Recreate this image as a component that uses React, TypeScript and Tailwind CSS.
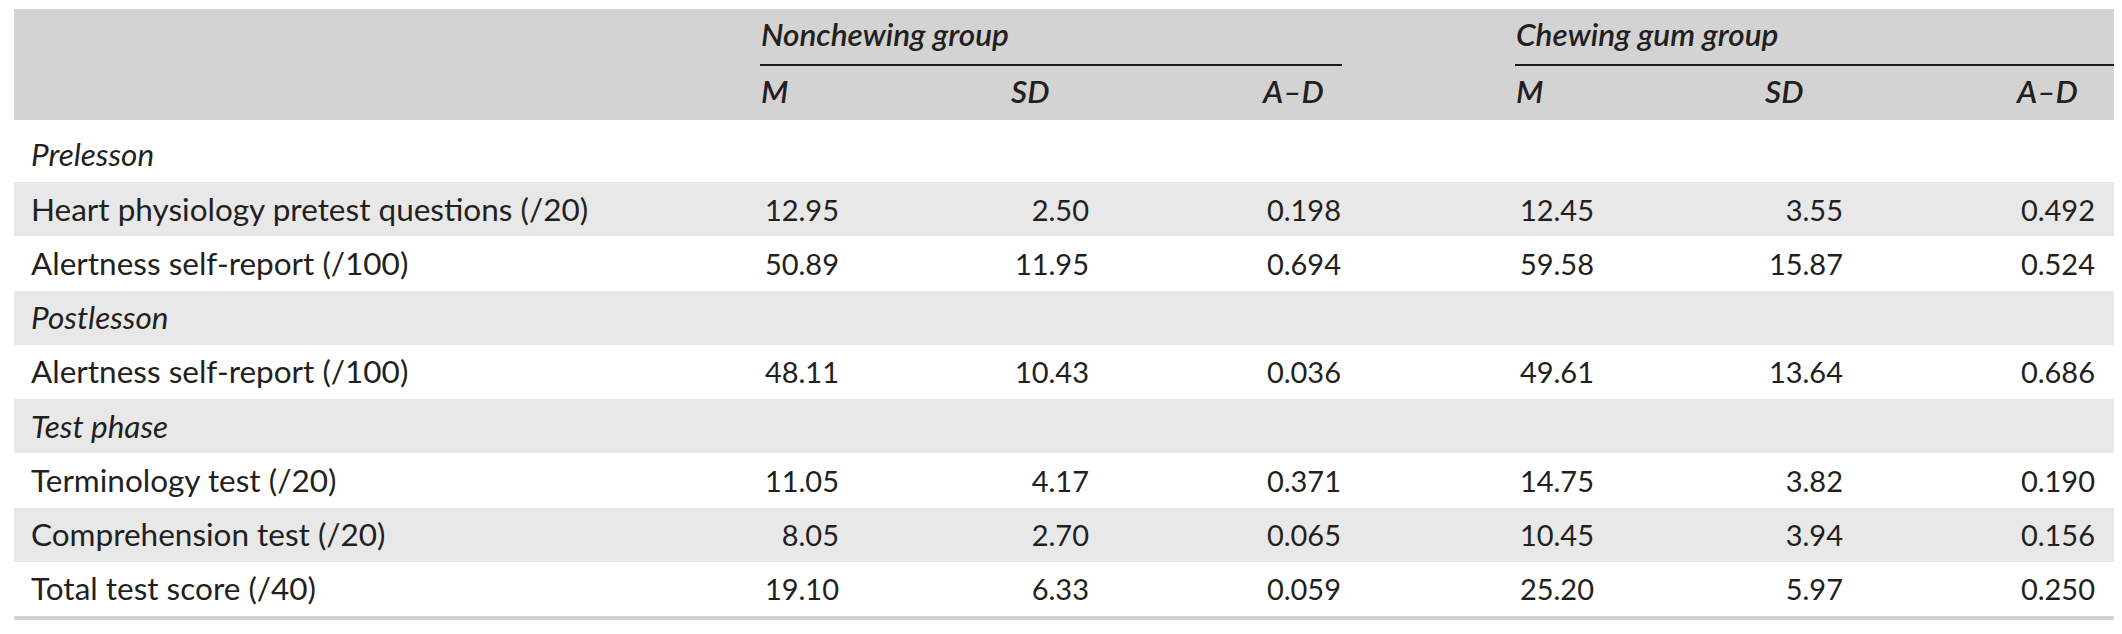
import React from "react";

type Row = {
  label: string;
  section?: boolean;
  values?: string[];
};

const rows: Row[] = [
  { label: "Prelesson", section: true },
  { label: "Heart physiology pretest questions (/20)", values: ["12.95", "2.50", "0.198", "12.45", "3.55", "0.492"] },
  { label: "Alertness self-report (/100)", values: ["50.89", "11.95", "0.694", "59.58", "15.87", "0.524"] },
  { label: "Postlesson", section: true },
  { label: "Alertness self-report (/100)", values: ["48.11", "10.43", "0.036", "49.61", "13.64", "0.686"] },
  { label: "Test phase", section: true },
  { label: "Terminology test (/20)", values: ["11.05", "4.17", "0.371", "14.75", "3.82", "0.190"] },
  { label: "Comprehension test (/20)", values: ["8.05", "2.70", "0.065", "10.45", "3.94", "0.156"] },
  { label: "Total test score (/40)", values: ["19.10", "6.33", "0.059", "25.20", "5.97", "0.250"] },
];

const cols = "grid grid-cols-[730px_250px_252px_253px_249px_252px_114px]";

const App = () => {
  return (
    <div
      className="min-h-screen bg-white pl-[14px] pt-[9px] text-[#231f20]"
      style={{ fontFamily: "Lato, 'Open Sans', sans-serif" }}
    >
      <div className="w-[2100px] text-[31.5px] leading-[35px]">
        {/* header */}
        <div className="bg-[#d3d3d3]">
          <div className={`${cols} h-[57px]`}>
            <div />
            <div className="col-span-3 pl-[16px]">
              <div className="h-full w-[582px] border-b-2 border-[#1a1a1a] pl-[1px] pt-[8px] font-semibold italic">
                Nonchewing group
              </div>
            </div>
            <div className="col-span-3 pl-[16px]">
              <div className="h-full w-[599px] border-b-2 border-[#1a1a1a] pl-[1px] pt-[8px] font-semibold italic">
                Chewing gum group
              </div>
            </div>
          </div>
          <div className={`${cols} h-[54px] pt-[8px] font-semibold italic`}>
            <div />
            <div className="pl-[17px]">M</div>
            <div className="pl-[17px]">SD</div>
            <div className="pl-[17px]">A–D</div>
            <div className="pl-[17px]">M</div>
            <div className="pl-[17px]">SD</div>
            <div className="pl-[17px]">A–D</div>
          </div>
        </div>

        {/* body */}
        {rows.map((row, i) => (
          <div
            key={i}
            className={`${cols} ${i === 0 ? "h-[62px] items-start pt-[17px]" : "h-[54.25px] items-center"} ${
              i % 2 === 1 ? "bg-[#e8e8e8]" : "bg-white"
            }`}
          >
            <div className={`pl-[17px] ${row.section ? "italic" : ""}`}>{row.label}</div>
            {row.values?.map((v, j) => (
              <div key={j} className="pl-[17px] text-[29px]">
                <div className="w-[78px] text-right">{v}</div>
              </div>
            ))}
          </div>
        ))}
        <div className="h-[4px] bg-[#d3d3d3]" />
      </div>
    </div>
  );
};

export default App;
